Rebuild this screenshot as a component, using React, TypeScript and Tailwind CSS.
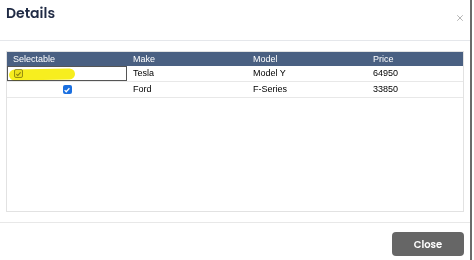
import { X } from "lucide-react";

interface Car {
  make: string;
  model: string;
  price: number;
  selected: boolean;
}

const cars: Car[] = [
  { make: "Tesla", model: "Model Y", price: 64950, selected: true },
  { make: "Ford", model: "F-Series", price: 33850, selected: true },
];

function Checkbox({ faded }: { faded?: boolean }) {
  return (
    <span
      className={
        "inline-flex h-[9px] w-[9px] items-center justify-center rounded-[2px] " +
        (faded ? "border border-[#9c9a7a] bg-[#f4f2d8]" : "bg-[#1a6fe0]")
      }
    >
      <svg viewBox="0 0 10 10" className="h-[8px] w-[8px]">
        <path d="M2 5.2l2 2 4-4.4" fill="none" stroke={faded ? "#8a8660" : "#fff"} strokeWidth="1.6" />
      </svg>
    </span>
  );
}

export default function App() {
  return (
    <div className="relative h-[260px] w-[474px] overflow-hidden bg-white font-['Liberation_Sans',Arial,sans-serif]">
      <div className="flex h-full w-[472px] flex-col border-r-2 border-[#6b6b6b]">
        <div className="flex h-[41px] items-start justify-between border-b border-[#e5e7eb] pl-[6px] pr-[5px]">
          <h2 className="mt-[3px] font-['Poppins','Inter',sans-serif] text-[14px] font-semibold text-[#1f2a44]">
            Details
          </h2>
          <X className="mt-[13px] h-[10px] w-[10px] text-[#888]" strokeWidth={1.5} />
        </div>

        <div className="px-[6px] pt-[10px]">
          <div className="h-[161px] border border-[#e2e2e2]">
            <div className="grid h-[14px] grid-cols-[120px_120px_120px_1fr] bg-[#4a6082] text-[9px] leading-[14px] text-white">
              <div className="pl-[6px]">Selectable</div>
              <div className="pl-[6px]">Make</div>
              <div className="pl-[6px]">Model</div>
              <div className="pl-[6px]">Price</div>
            </div>
            {cars.map((car, i) => (
              <div
                key={car.make}
                className="grid h-[16px] grid-cols-[120px_120px_120px_1fr] border-b border-[#e8e8e8] text-[9px] leading-[15px] text-black"
              >
                {i === 0 ? (
                  <div className="relative flex items-center border border-[#555] pl-[6px]">
                    <Checkbox faded />
                    {/* highlighter mark over the cell */}
                    <span className="absolute left-[1px] top-[2px] h-[11px] w-[66px] -rotate-1 rounded-full bg-[#f7ee1f] mix-blend-multiply" />
                  </div>
                ) : (
                  <div className="flex items-center justify-center">
                    <Checkbox />
                  </div>
                )}
                <div className="pl-[6px]">{car.make}</div>
                <div className="pl-[6px]">{car.model}</div>
                <div className="pl-[6px]">{car.price}</div>
              </div>
            ))}
          </div>
        </div>

        <div className="mt-[10px] flex flex-1 items-start justify-end border-t border-[#e8e8e8] pr-[6px] pt-[9px]">
          <button className="h-[24px] w-[72px] rounded-[4px] bg-[#666] font-['Poppins','Inter',sans-serif] text-[10px] font-semibold text-white">
            Close
          </button>
        </div>
      </div>
    </div>
  );
}
